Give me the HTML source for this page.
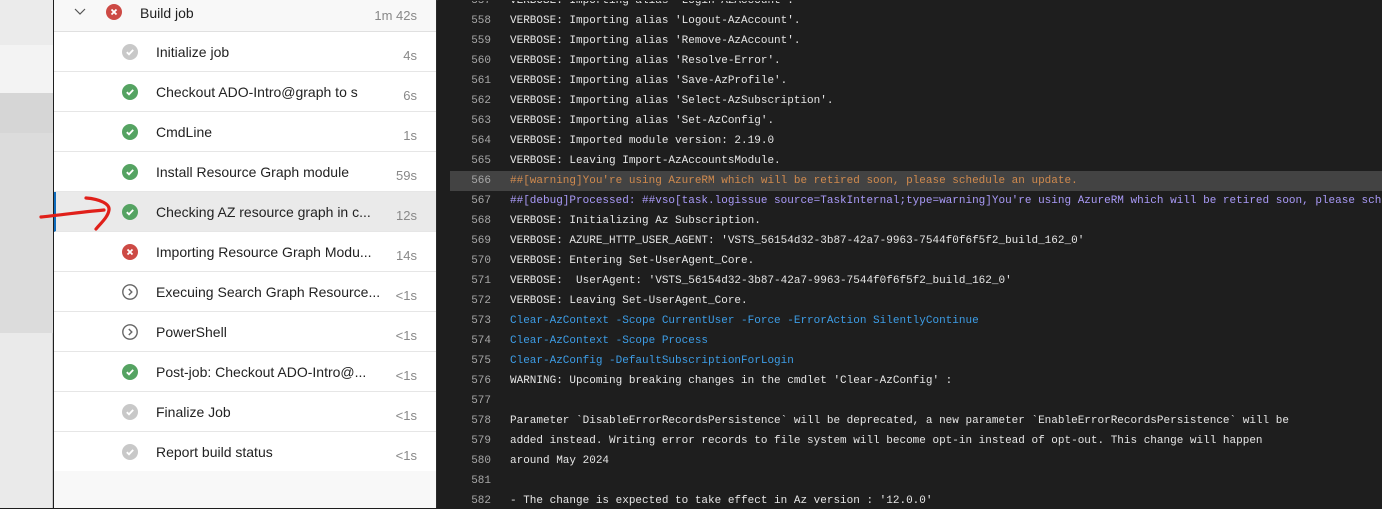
<!DOCTYPE html>
<html><head><meta charset="utf-8"><style>
*{margin:0;padding:0;box-sizing:border-box}
body{width:1382px;height:508px;overflow:hidden;position:relative;background:#1e1e1e;font-family:"Liberation Sans",sans-serif}
.side{position:absolute;left:0;top:0;width:53px;height:508px;background:#eaeaea;border-right:1px solid #c8c8c8}
.panel{position:absolute;left:54px;top:0;width:383px;height:508px;background:#f8f8f8}
.row{position:absolute;left:0;width:383px;height:40px;background:#fff;border-bottom:1px solid #e6e6e6}
.row .t{position:absolute;left:102px;top:12px;font-size:14px;color:#222;white-space:nowrap}
.row .d{position:absolute;right:20px;top:16px;font-size:13px;color:#888}
.ic{position:absolute;left:68px;top:12px;width:16px;height:16px}
.log{position:absolute;left:437px;top:1px;width:945px;height:508px;background:#1e1e1e;font-family:"Liberation Mono",monospace;font-size:11px;color:#e6e6e6;overflow:hidden}
.l{position:absolute;left:0;width:945px;height:20px;line-height:20px;white-space:pre;overflow:hidden}
.l .n{position:absolute;left:0;width:54px;text-align:right;color:#a8a8a8}
.l .c{position:absolute;left:73px}
.hl{background:#434343;left:13px!important}
.hl .n{left:-13px}.hl .c{left:60px}
</style></head><body>
<div class="side">
<div style="position:absolute;top:0;height:45px;width:53px;background:#ebebeb"></div>
<div style="position:absolute;top:45px;height:48px;width:53px;background:#f3f3f3"></div>
<div style="position:absolute;top:93px;height:40px;width:53px;background:#d6d6d6"></div>
<div style="position:absolute;top:133px;height:200px;width:53px;background:#dcdcdc"></div>
</div>
<div class="panel">
<div class="row" style="top:0;height:32px;background:#f8f8f8;border-bottom:1px solid #e0e0e0">
<svg style="position:absolute;left:20px;top:7px" width="12" height="10"><path d="M1 2 L6 7 L11 2" stroke="#555" stroke-width="1.2" fill="none"/></svg>
<svg class="ic" style="left:52px;top:4px"><circle cx="8" cy="8" r="8" fill="#cd4a45"/><path d="M5.5 5.5L10.5 10.5M10.5 5.5L5.5 10.5" stroke="#fff" stroke-width="1.8"/></svg>
<span class="t" style="left:86px;top:5px">Build job</span><span class="d" style="top:8px">1m 42s</span></div>
</div>
<svg width="0" height="0" style="position:absolute"><defs>
<g id="ok"><circle cx="8" cy="8" r="8" fill="#55a362"/><path d="M4.8 8.2L7 10.3L11.2 5.9" stroke="#fff" stroke-width="1.8" fill="none"/></g>
<g id="gr"><circle cx="8" cy="8" r="8" fill="#c8c8c8"/><path d="M4.8 8.2L7 10.3L11.2 5.9" stroke="#fff" stroke-width="1.8" fill="none"/></g>
<g id="er"><circle cx="8" cy="8" r="8" fill="#cd4a45"/><path d="M5.5 5.5L10.5 10.5M10.5 5.5L5.5 10.5" stroke="#fff" stroke-width="1.8"/></g>
<g id="sk"><circle cx="8" cy="8" r="7.2" fill="none" stroke="#666" stroke-width="1.4"/><path d="M6.8 5L9.8 8L6.8 11" stroke="#666" stroke-width="1.4" fill="none"/></g>
</defs></svg>
<div id="rows" style="position:absolute;left:54px;top:0">
<div class="row" style="top:32px"><svg class="ic"><use href="#gr"/></svg><span class="t">Initialize job</span><span class="d">4s</span></div>
<div class="row" style="top:72px"><svg class="ic"><use href="#ok"/></svg><span class="t">Checkout ADO-Intro@graph to s</span><span class="d">6s</span></div>
<div class="row" style="top:112px"><svg class="ic"><use href="#ok"/></svg><span class="t">CmdLine</span><span class="d">1s</span></div>
<div class="row" style="top:152px"><svg class="ic"><use href="#ok"/></svg><span class="t">Install Resource Graph module</span><span class="d">59s</span></div>
<div class="row" style="top:192px;background:#eaeaea;border-left:2px solid #0f6cbd"><svg class="ic" style="left:66px"><use href="#ok"/></svg><span class="t" style="left:100px">Checking AZ resource graph in c...</span><span class="d">12s</span></div>
<div class="row" style="top:232px"><svg class="ic"><use href="#er"/></svg><span class="t">Importing Resource Graph Modu...</span><span class="d">14s</span></div>
<div class="row" style="top:272px"><svg class="ic"><use href="#sk"/></svg><span class="t">Execuing Search Graph Resource...</span><span class="d">&lt;1s</span></div>
<div class="row" style="top:312px"><svg class="ic"><use href="#sk"/></svg><span class="t">PowerShell</span><span class="d">&lt;1s</span></div>
<div class="row" style="top:352px"><svg class="ic"><use href="#ok"/></svg><span class="t">Post-job: Checkout ADO-Intro@...</span><span class="d">&lt;1s</span></div>
<div class="row" style="top:392px"><svg class="ic"><use href="#gr"/></svg><span class="t">Finalize Job</span><span class="d">&lt;1s</span></div>
<div class="row" style="top:432px;height:39px;border-bottom:none"><svg class="ic"><use href="#gr"/></svg><span class="t">Report build status</span><span class="d">&lt;1s</span></div>
</div>
<svg style="position:absolute;left:0;top:0" width="140" height="240"><path d="M41 217 C60 215 82 212 104 210 M86 198 C100 199 110 204 109 210 C108 217 101 223 96 229" stroke="#e0201a" stroke-width="3.2" fill="none" stroke-linecap="round"/></svg>
<div style="position:absolute;left:436px;top:0;width:2px;height:508px;background:#2a2a2a"></div>
<div class="log">
<div class="l" style="top:-10px"><span class="n">557</span><span class="c">VERBOSE: Importing alias 'Login-AzAccount'.</span></div>
<div class="l" style="top:10px"><span class="n">558</span><span class="c">VERBOSE: Importing alias 'Logout-AzAccount'.</span></div>
<div class="l" style="top:30px"><span class="n">559</span><span class="c">VERBOSE: Importing alias 'Remove-AzAccount'.</span></div>
<div class="l" style="top:50px"><span class="n">560</span><span class="c">VERBOSE: Importing alias 'Resolve-Error'.</span></div>
<div class="l" style="top:70px"><span class="n">561</span><span class="c">VERBOSE: Importing alias 'Save-AzProfile'.</span></div>
<div class="l" style="top:90px"><span class="n">562</span><span class="c">VERBOSE: Importing alias 'Select-AzSubscription'.</span></div>
<div class="l" style="top:110px"><span class="n">563</span><span class="c">VERBOSE: Importing alias 'Set-AzConfig'.</span></div>
<div class="l" style="top:130px"><span class="n">564</span><span class="c">VERBOSE: Imported module version: 2.19.0</span></div>
<div class="l" style="top:150px"><span class="n">565</span><span class="c">VERBOSE: Leaving Import-AzAccountsModule.</span></div>
<div class="l hl" style="top:170px"><span class="n">566</span><span class="c" style="color:#d08a4e">##[warning]You're using AzureRM which will be retired soon, please schedule an update.</span></div>
<div class="l" style="top:190px"><span class="n">567</span><span class="c" style="color:#a99af7">##[debug]Processed: ##vso[task.logissue source=TaskInternal;type=warning]You're using AzureRM which will be retired soon, please schedule an update.</span></div>
<div class="l" style="top:210px"><span class="n">568</span><span class="c">VERBOSE: Initializing Az Subscription.</span></div>
<div class="l" style="top:230px"><span class="n">569</span><span class="c">VERBOSE: AZURE_HTTP_USER_AGENT: 'VSTS_56154d32-3b87-42a7-9963-7544f0f6f5f2_build_162_0'</span></div>
<div class="l" style="top:250px"><span class="n">570</span><span class="c">VERBOSE: Entering Set-UserAgent_Core.</span></div>
<div class="l" style="top:270px"><span class="n">571</span><span class="c">VERBOSE:  UserAgent: 'VSTS_56154d32-3b87-42a7-9963-7544f0f6f5f2_build_162_0'</span></div>
<div class="l" style="top:290px"><span class="n">572</span><span class="c">VERBOSE: Leaving Set-UserAgent_Core.</span></div>
<div class="l" style="top:310px"><span class="n">573</span><span class="c" style="color:#3d9de6">Clear-AzContext -Scope CurrentUser -Force -ErrorAction SilentlyContinue</span></div>
<div class="l" style="top:330px"><span class="n">574</span><span class="c" style="color:#3d9de6">Clear-AzContext -Scope Process</span></div>
<div class="l" style="top:350px"><span class="n">575</span><span class="c" style="color:#3d9de6">Clear-AzConfig -DefaultSubscriptionForLogin</span></div>
<div class="l" style="top:370px"><span class="n">576</span><span class="c">WARNING: Upcoming breaking changes in the cmdlet 'Clear-AzConfig' :</span></div>
<div class="l" style="top:390px"><span class="n">577</span><span class="c"></span></div>
<div class="l" style="top:410px"><span class="n">578</span><span class="c">Parameter `DisableErrorRecordsPersistence` will be deprecated, a new parameter `EnableErrorRecordsPersistence` will be</span></div>
<div class="l" style="top:430px"><span class="n">579</span><span class="c">added instead. Writing error records to file system will become opt-in instead of opt-out. This change will happen</span></div>
<div class="l" style="top:450px"><span class="n">580</span><span class="c">around May 2024</span></div>
<div class="l" style="top:470px"><span class="n">581</span><span class="c"></span></div>
<div class="l" style="top:490px"><span class="n">582</span><span class="c">- The change is expected to take effect in Az version : '12.0.0'</span></div>
</div>
</body></html>
